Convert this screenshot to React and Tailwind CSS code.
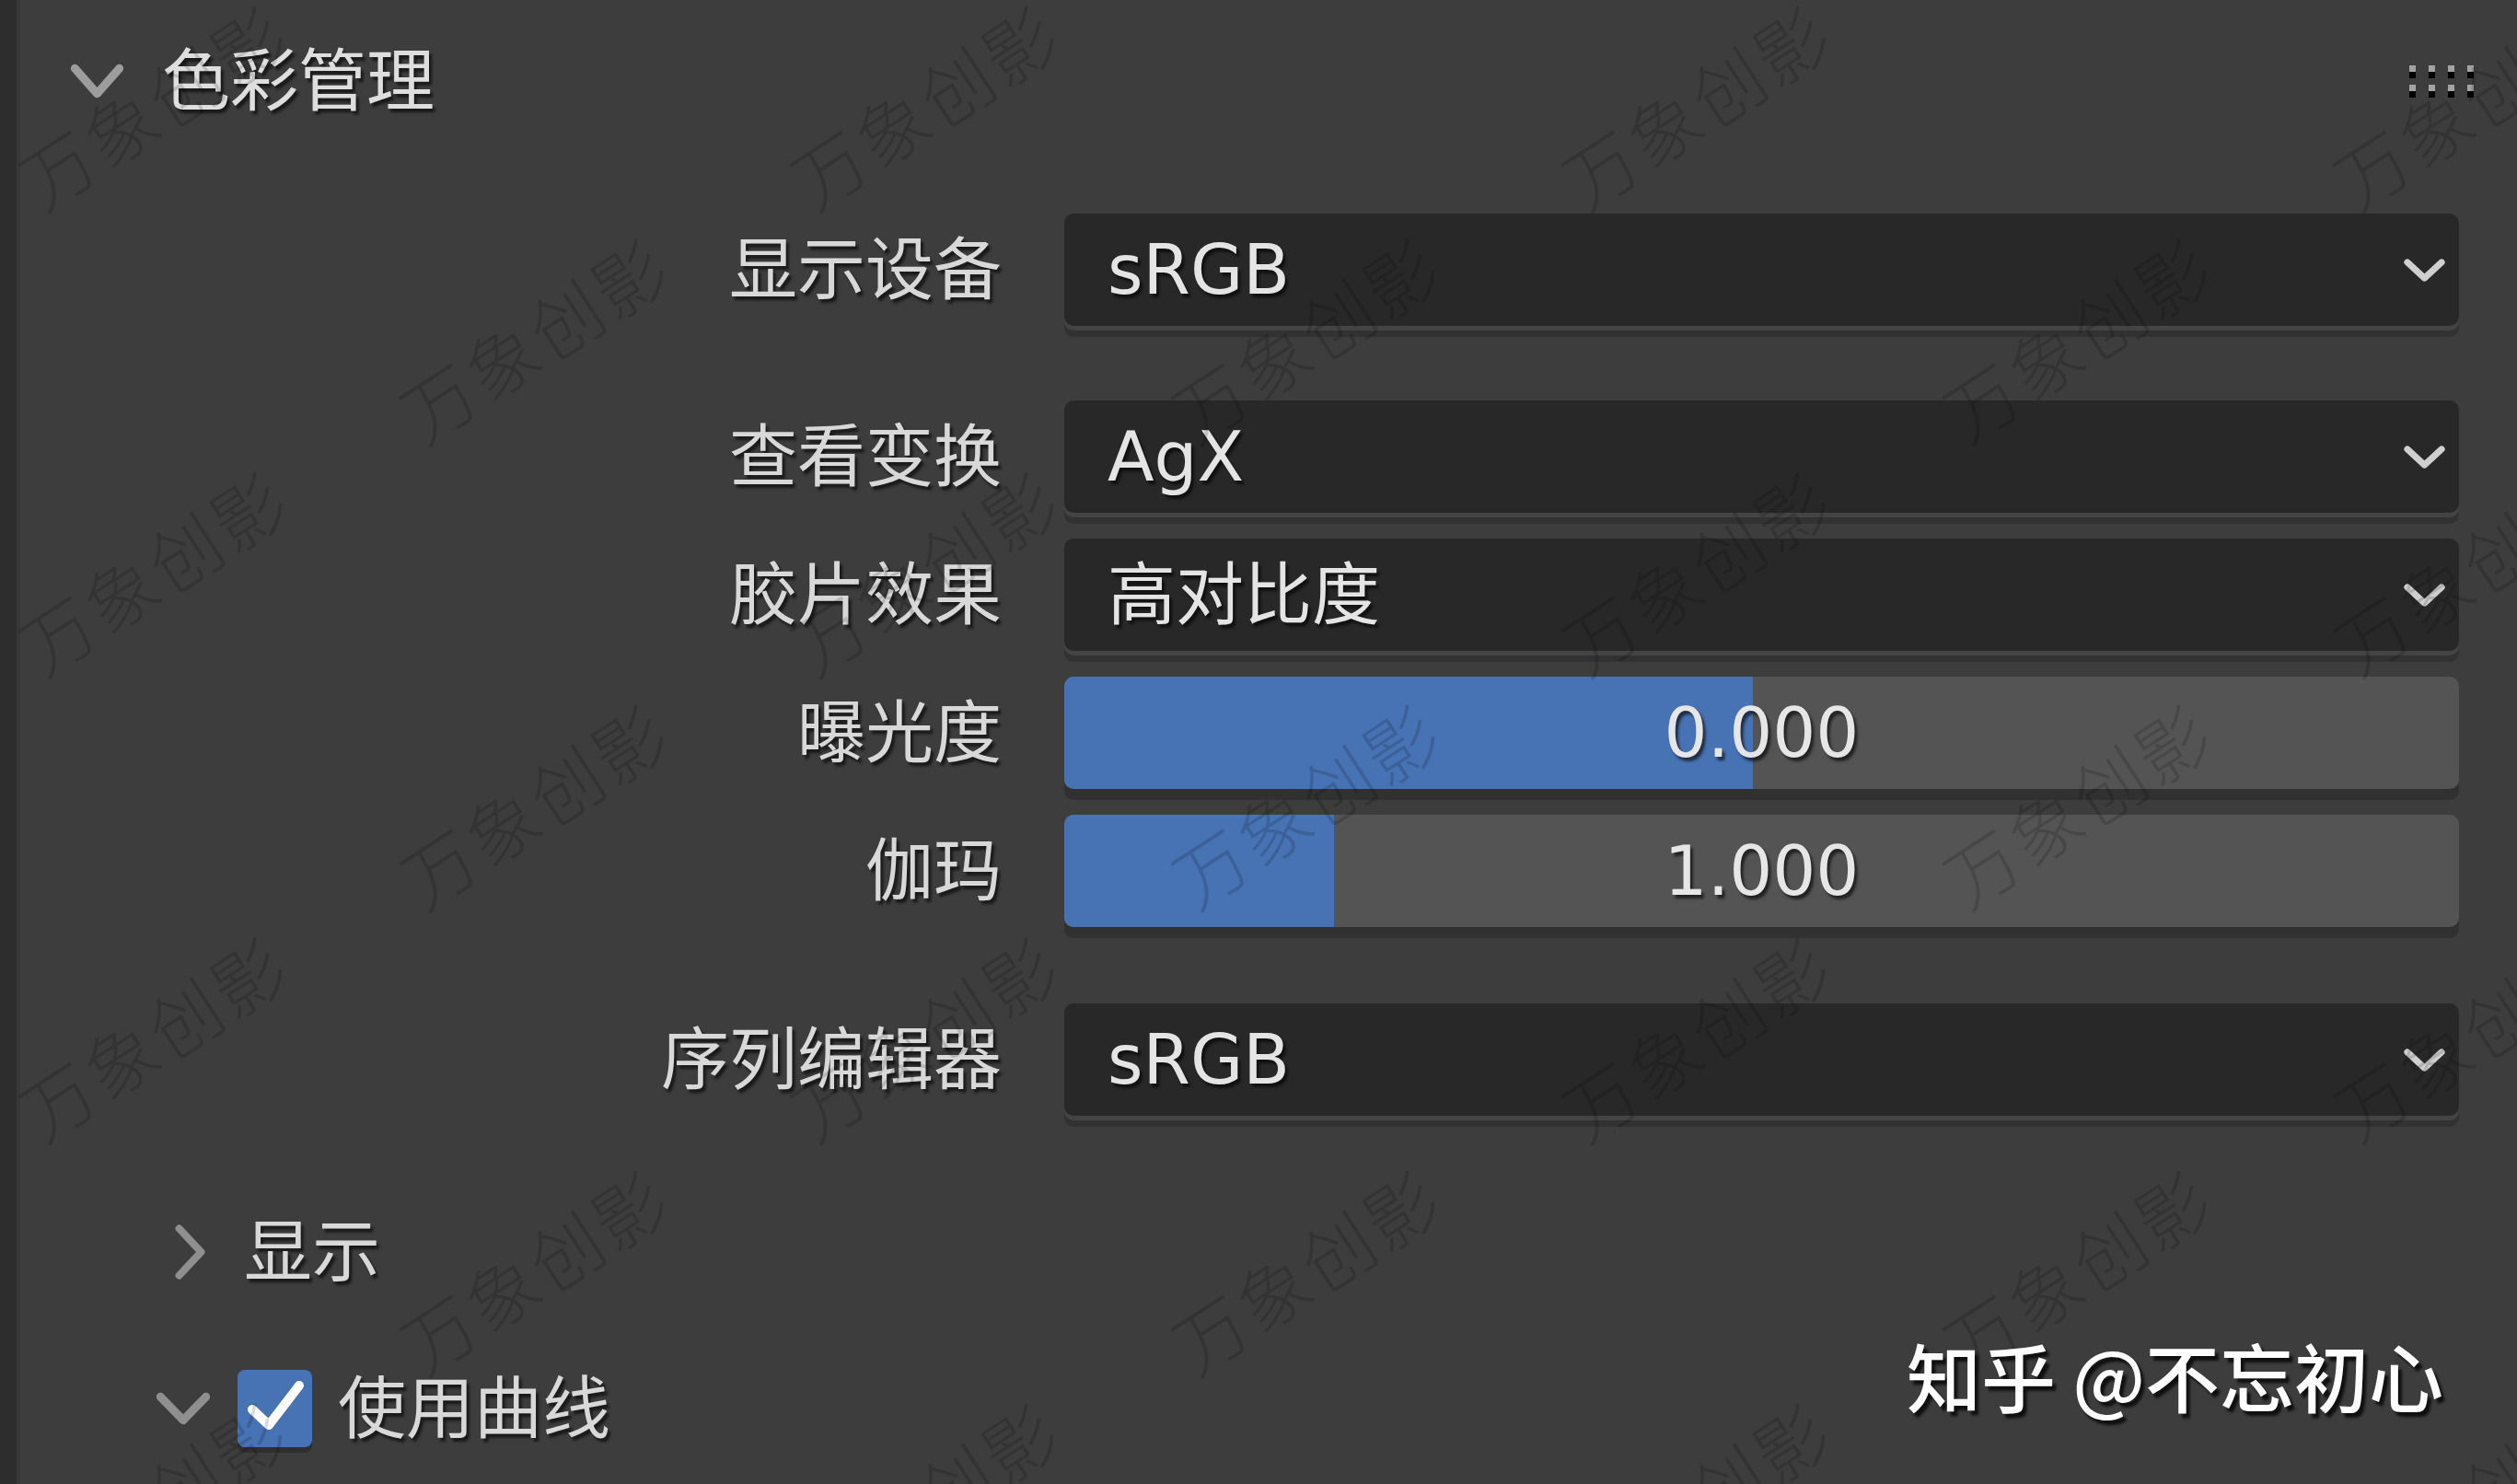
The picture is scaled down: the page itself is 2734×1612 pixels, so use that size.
import React from "react";

const EVEN_X = [166, 1004, 1842, 2680];
const ODD_X = [-258, 580, 1418, 2256];
const WATERMARKS = [];
[-140, 113, 366, 619, 872, 1125, 1378, 1631].forEach((y, i) => {
  const xs = i % 2 === 1 ? EVEN_X : ODD_X;
  xs.forEach((x) => WATERMARKS.push({ x, y }));
});

function ChevronDown({ w, h, stroke, sw }) {
  return (
    <svg width={w} height={h} viewBox={`0 0 ${w} ${h}`} className="shrink-0">
      <polyline
        points={`${sw * 0.7},${sw * 0.7} ${w / 2},${h - sw * 0.7} ${w - sw * 0.7},${sw * 0.7}`}
        fill="none"
        stroke={stroke}
        strokeWidth={sw}
        strokeLinecap="round"
        strokeLinejoin="round"
      />
    </svg>
  );
}

function ChevronRight({ w, h, stroke, sw }) {
  return (
    <svg width={w} height={h} viewBox={`0 0 ${w} ${h}`} className="shrink-0">
      <polyline
        points={`${sw * 0.7},${sw * 0.7} ${w - sw * 0.7},${h / 2} ${sw * 0.7},${h - sw * 0.7}`}
        fill="none"
        stroke={stroke}
        strokeWidth={sw}
        strokeLinecap="round"
        strokeLinejoin="round"
      />
    </svg>
  );
}

function Label({ children }) {
  return (
    <div className="w-[1066px] shrink-0 text-right text-[74px] leading-none text-[#d8d8d8] [text-shadow:3px_4px_3px_rgba(0,0,0,0.6)]">
      {children}
    </div>
  );
}

function Dropdown({ label, value }) {
  return (
    <div className="flex h-[122px] items-center">
      <Label>{label}</Label>
      <div className="ml-[68px] flex h-full w-[1515px] items-center justify-between rounded-[10px] bg-[#282828] pl-[47px] pr-[14px] shadow-[0_5px_0_#444444,0_12px_0_#323232]">
        <span className="text-[74px] leading-none text-[#e4e4e4] [text-shadow:3px_4px_3px_rgba(0,0,0,0.6)]">
          {value}
        </span>
        <ChevronDown w={47} h={27} stroke="#cfcfcf" sw={7} />
      </div>
    </div>
  );
}

function Slider({ label, value, fill }) {
  return (
    <div className="flex h-[122px] items-center">
      <Label>{label}</Label>
      <div className="ml-[68px] grid h-full w-[1515px] overflow-hidden rounded-[10px] bg-[#545454] shadow-[0_12px_0_#313131]">
        <div className="col-start-1 row-start-1 h-full bg-[#4772b3]" style={{ width: fill }} />
        <div className="col-start-1 row-start-1 flex items-center justify-center text-[74px] leading-none text-[#e6e6e6] [text-shadow:3px_4px_3px_rgba(0,0,0,0.6)]">
          {value}
        </div>
      </div>
    </div>
  );
}

export default function App() {
  return (
    <div className="relative flex h-[1612px] w-[2734px] overflow-hidden bg-[#3d3d3d] [font-family:'DejaVu_Sans','Noto_Sans_CJK_SC',sans-serif]">
      <div className="w-[18px] shrink-0 bg-[#2d2d2d]" />
      <div className="w-[4px] shrink-0 bg-[#383838]" />
      <div className="flex flex-1 flex-col">
        <header className="flex h-[176px] items-center justify-between pr-[47px]">
          <div className="flex items-center">
            <div className="ml-[53px]">
              <ChevronDown w={61} h={40} stroke="#9d9d9d" sw={9} />
            </div>
            <span className="ml-[40px] text-[74px] leading-none text-[#dedede] [text-shadow:3px_4px_3px_rgba(0,0,0,0.6)]">
              色彩管理
            </span>
          </div>
          <div className="mb-[6px] grid grid-cols-4 gap-x-[14px] gap-y-[14px]">
            {Array.from({ length: 8 }).map((_, i) => (
              <div key={i} className="h-[7px] w-[7px] bg-[#a3a3a3] shadow-[0_7px_0_#000000]" />
            ))}
          </div>
        </header>

        <div className="mt-[56px] flex flex-col">
          <Dropdown label="显示设备" value="sRGB" />
        </div>

        <div className="mt-[81px] flex flex-col gap-[28px]">
          <Dropdown label="查看变换" value="AgX" />
          <Dropdown label="胶片效果" value="高对比度" />
          <Slider label="曝光度" value="0.000" fill="748px" />
          <Slider label="伽玛" value="1.000" fill="293px" />
        </div>

        <div className="mt-[83px] flex flex-col">
          <Dropdown label="序列编辑器" value="sRGB" />
        </div>

        <div className="mt-[98px] flex h-[100px] items-center">
          <div className="ml-[167px]">
            <ChevronRight w={35} h={62} stroke="#8f8f8f" sw={8} />
          </div>
          <span className="ml-[41px] text-[74px] leading-none text-[#d8d8d8] [text-shadow:3px_4px_3px_rgba(0,0,0,0.6)]">
            显示
          </span>
        </div>

        <div className="mt-[70px] flex h-[100px] items-center">
          <div className="ml-[146px]">
            <ChevronDown w={62} h={38} stroke="#8f8f8f" sw={9} />
          </div>
          <div className="ml-[28px] flex h-[84px] w-[81px] shrink-0 items-center justify-center rounded-[8px] bg-[#4772b3] shadow-[0_6px_0_#2f2f2f]">
            <svg width="81" height="84" viewBox="0 0 81 84">
              <polyline
                points="16,43 34,60 67,17"
                fill="none"
                stroke="#ffffff"
                strokeWidth="10"
                strokeLinecap="round"
                strokeLinejoin="round"
              />
            </svg>
          </div>
          <span className="ml-[28px] text-[74px] leading-none text-[#d8d8d8] [text-shadow:3px_4px_3px_rgba(0,0,0,0.6)]">
            使用曲线
          </span>
        </div>
      </div>

      {WATERMARKS.map((m, i) => (
        <span
          key={i}
          className="pointer-events-none absolute -translate-x-1/2 -translate-y-1/2 -rotate-[33deg] whitespace-nowrap text-[78px] font-light leading-none tracking-[4px] text-[rgba(0,0,0,0.15)] [font-family:'Noto_Sans_CJK_SC',sans-serif]"
          style={{ left: m.x, top: m.y }}
        >
          万象创影
        </span>
      ))}

      <div className="pointer-events-none absolute left-[2071px] top-[1452px] whitespace-nowrap text-[81px] font-medium leading-none text-white [font-family:'Noto_Sans_CJK_SC',sans-serif] [text-shadow:4px_5px_3px_rgba(0,0,0,0.75)]">
        知乎 @不忘初心
      </div>
    </div>
  );
}
